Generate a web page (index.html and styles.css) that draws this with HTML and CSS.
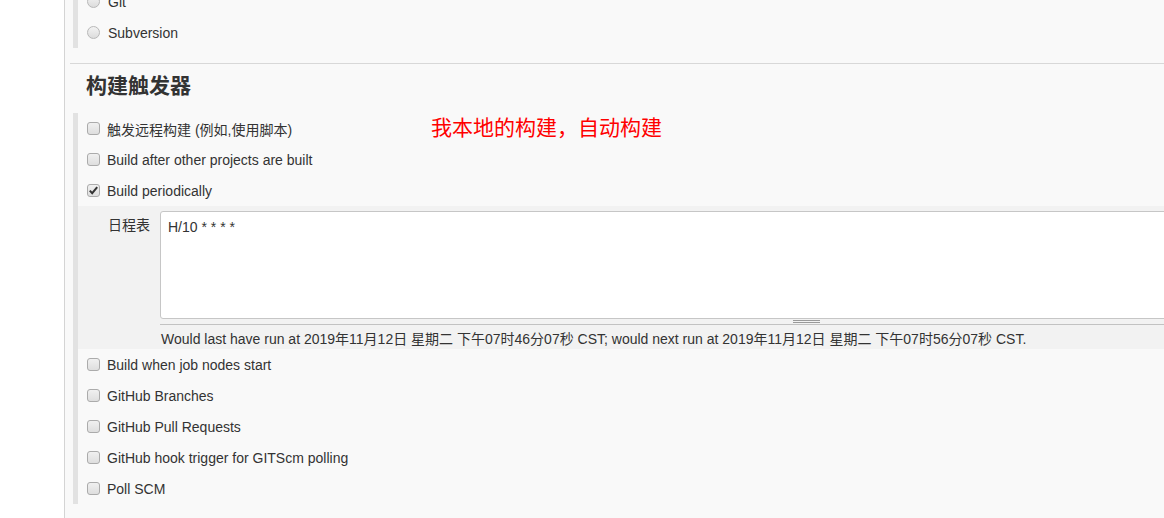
FILE: index.html
```html
<!DOCTYPE html>
<html lang="zh">
<head>
<meta charset="utf-8">
<title>构建触发器</title>
<link rel="stylesheet" href="styles.css">
</head>
<body>
<div class="page">
  <div class="gutter"></div>
  <main class="main">
    <div class="block scm">
      <div class="row"><span class="radio"></span><span class="txt">Git</span></div>
      <div class="row"><span class="radio"></span><span class="txt">Subversion</span></div>
    </div>
    <div class="section-head"><h2>构建触发器</h2></div>
    <div class="block triggers">
      <div class="note">我本地的构建，自动构建</div>
      <div class="row"><span class="cb"></span><span class="txt">触发远程构建 (例如,使用脚本)</span></div>
      <div class="row"><span class="cb"></span><span class="txt">Build after other projects are built</span></div>
      <div class="row"><span class="cb"><svg width="11" height="11" viewBox="0 0 11 11"><path d="M1.8 5.6 L4.2 8.2 L9.2 2.2" fill="none" stroke="#333" stroke-width="2"/></svg></span><span class="txt">Build periodically</span></div>
      <div class="nested">
        <div class="label">日程表</div>
        <div class="field">
          <div class="textarea">H/10 * * * *</div>
          <div class="resize"><span class="grip"></span></div>
          <div class="desc">Would last have run at 2019年11月12日 星期二 下午07时46分07秒 CST; would next run at 2019年11月12日 星期二 下午07时56分07秒 CST.</div>
        </div>
      </div>
      <div class="row"><span class="cb"></span><span class="txt">Build when job nodes start</span></div>
      <div class="row"><span class="cb"></span><span class="txt">GitHub Branches</span></div>
      <div class="row"><span class="cb"></span><span class="txt">GitHub Pull Requests</span></div>
      <div class="row"><span class="cb"></span><span class="txt">GitHub hook trigger for GITScm polling</span></div>
      <div class="row"><span class="cb"></span><span class="txt">Poll SCM</span></div>
    </div>
  </main>
</div>
</body>
</html>
```

FILE: styles.css
```css
html, body {
  margin: 0;
  padding: 0;
}
body {
  width: 1164px;
  height: 518px;
  overflow: hidden;
  font-family: "Liberation Sans", Arial, "Noto Sans CJK SC", sans-serif;
  font-size: 14px;
  color: #333;
  background: #fff;
}
.page {
  display: flex;
  height: 518px;
}
.gutter {
  width: 64px;
  flex-shrink: 0;
  background: #fff;
}
.main {
  flex: 1;
  min-width: 0;
  overflow: hidden;
  background: #f9f9f9;
  border-left: 1px solid #d4d4d4;
}
.block {
  margin-left: 8px;
  border-left: 5px solid #e2e2e2;
}
.scm {
  margin-top: -14px;
}
.row {
  height: 31px;
  display: flex;
  align-items: center;
  padding-left: 9px;
  gap: 7px;
  white-space: nowrap;
}
.scm .row {
  gap: 8px;
}
.radio {
  width: 13px;
  height: 13px;
  box-sizing: border-box;
  border-radius: 50%;
  border: 1px solid #b8b8b8;
  background: linear-gradient(#f3f3f3, #dcdcdc);
  flex-shrink: 0;
}
.cb {
  width: 13px;
  height: 13px;
  box-sizing: border-box;
  border-radius: 3px;
  border: 1px solid #ababab;
  background: linear-gradient(#f0f0f0, #dedede);
  flex-shrink: 0;
  display: flex;
  align-items: center;
  justify-content: center;
}
.cb svg {
  display: block;
}
.section-head {
  margin-top: 15px;
  margin-left: 5px;
  border-top: 1px solid #d8d8d8;
  padding: 6px 0 15px 16px;
}
.section-head h2 {
  margin: 0;
  font-size: 21px;
  line-height: 28px;
  font-weight: bold;
  font-family: "Noto Sans CJK SC", sans-serif;
  color: #333;
}
.triggers {
  position: relative;
}
.note {
  position: absolute;
  left: 353px;
  top: 0;
  font-family: "Noto Sans CJK SC", sans-serif;
  font-size: 21px;
  line-height: 26px;
  color: #f00;
  white-space: nowrap;
}
.nested {
  display: flex;
  background: #f2f2f2;
  padding-top: 5px;
}
.label {
  width: 82px;
  flex-shrink: 0;
  box-sizing: border-box;
  padding: 4px 10px 0 0;
  line-height: 20px;
  text-align: right;
}
.field {
  width: 1293px;
  flex-shrink: 0;
}
.textarea {
  height: 108px;
  box-sizing: border-box;
  border: 1px solid #c6c6c6;
  border-radius: 3px;
  background: #fff;
  padding: 6px 7px;
  line-height: 18px;
}
.resize {
  height: 5px;
  border-bottom: 1px solid #c2c2c2;
  display: flex;
  justify-content: center;
  align-items: center;
}
.grip {
  width: 27px;
  height: 3px;
  border-top: 1px solid #999;
  border-bottom: 1px solid #999;
  box-sizing: border-box;
}
.desc {
  padding: 4px 0 0 1px;
  line-height: 20px;
  white-space: nowrap;
}
```
